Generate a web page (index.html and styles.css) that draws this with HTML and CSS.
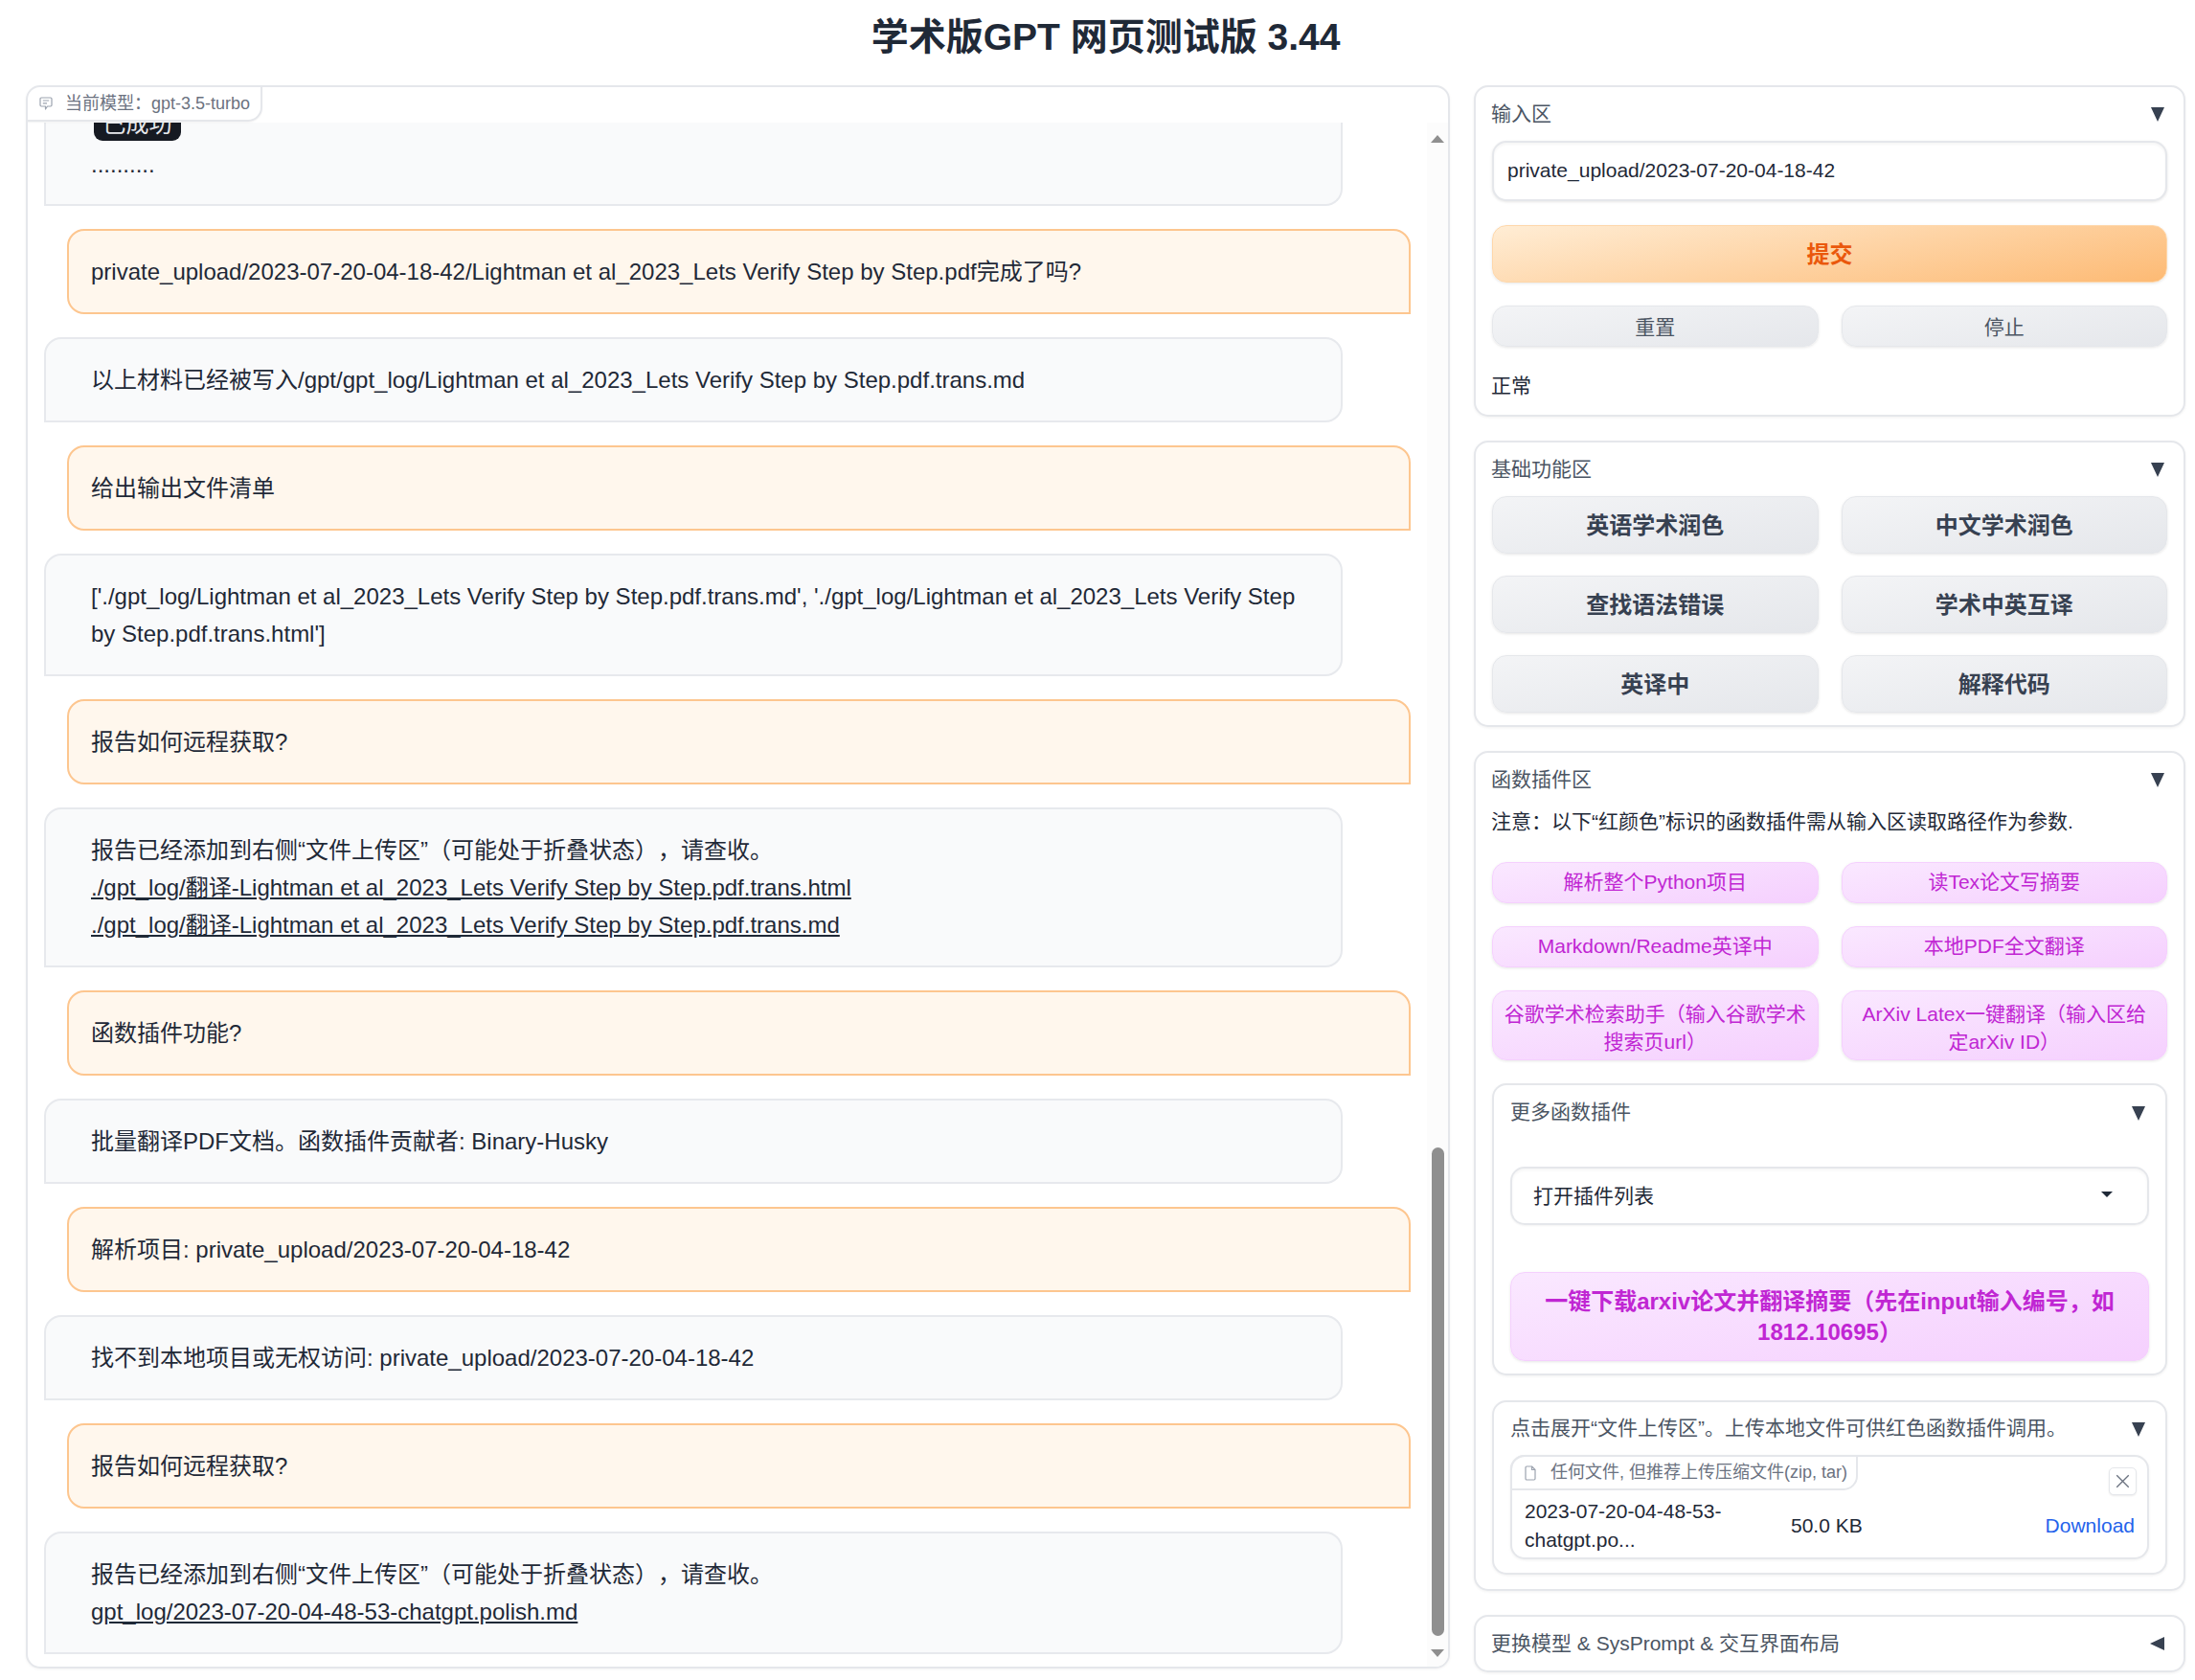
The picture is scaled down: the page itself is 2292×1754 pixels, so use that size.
FILE: index.html
```html
<!DOCTYPE html>
<html lang="zh-CN">
<head>
<meta charset="utf-8">
<title>学术版GPT 网页测试版 3.44</title>
<link rel="stylesheet" href="styles.css">
</head>
<body>
<h1 class="page-title">学术版GPT 网页测试版 3.44</h1>
<main class="layout">
  <section class="chat-panel">
    <div class="model-chip">
      <svg class="chip-icon" viewBox="0 0 14 14" fill="none" stroke="currentColor" stroke-width="1.2"><path d="M2.200 1h9.600A1.200 1.200 0 0 1 13 2.200v6.600A1.200 1.200 0 0 1 11.800 10H8.500L6.500 13V10H2.200A1.200 1.200 0 0 1 1 8.800V2.200A1.200 1.200 0 0 1 2.200 1z" stroke-linejoin="round"/><path d="M3.800 4h6.400M3.800 6.800h4.200"/></svg>
      <span class="chip-text">当前模型：gpt-3.5-turbo</span>
    </div>
    <div class="chat-scroll">
      <div class="messages">
        <div class="msg bot first">
          <span class="code-pill">已成功</span>
          <p class="dots">..........</p>
        </div>
        <div class="msg user">private_upload/2023-07-20-04-18-42/Lightman et al_2023_Lets Verify Step by Step.pdf完成了吗?</div>
        <div class="msg bot">以上材料已经被写入/gpt/gpt_log/Lightman et al_2023_Lets Verify Step by Step.pdf.trans.md</div>
        <div class="msg user">给出输出文件清单</div>
        <div class="msg bot">['./gpt_log/Lightman et al_2023_Lets Verify Step by Step.pdf.trans.md', './gpt_log/Lightman et al_2023_Lets Verify Step by Step.pdf.trans.html']</div>
        <div class="msg user">报告如何远程获取?</div>
        <div class="msg bot">报告已经添加到右侧“文件上传区”（可能处于折叠状态），请查收。<br><a href="#">./gpt_log/翻译-Lightman et al_2023_Lets Verify Step by Step.pdf.trans.html</a><br><a href="#">./gpt_log/翻译-Lightman et al_2023_Lets Verify Step by Step.pdf.trans.md</a></div>
        <div class="msg user">函数插件功能?</div>
        <div class="msg bot">批量翻译PDF文档。函数插件贡献者: Binary-Husky</div>
        <div class="msg user">解析项目: private_upload/2023-07-20-04-18-42</div>
        <div class="msg bot">找不到本地项目或无权访问: private_upload/2023-07-20-04-18-42</div>
        <div class="msg user">报告如何远程获取?</div>
        <div class="msg bot">报告已经添加到右侧“文件上传区”（可能处于折叠状态），请查收。<br><a href="#">gpt_log/2023-07-20-04-48-53-chatgpt.polish.md</a></div>
      </div>
      <div class="scrollbar">
        <span class="arrow-up"></span>
        <div class="track"><div class="thumb"></div></div>
        <span class="arrow-down"></span>
      </div>
    </div>
  </section>

  <aside class="side">
    <section class="card card-input">
      <div class="card-head"><span class="head-label">输入区</span><span class="tri-down"></span></div>
      <div class="text-input">private_upload/2023-07-20-04-18-42</div>
      <button class="btn btn-submit">提交</button>
      <div class="grid-2 row-tools">
        <button class="btn btn-plain">重置</button>
        <button class="btn btn-plain">停止</button>
      </div>
      <div class="status">正常</div>
    </section>

    <section class="card card-basic">
      <div class="card-head"><span class="head-label">基础功能区</span><span class="tri-down"></span></div>
      <div class="grid-2 basic-grid">
        <button class="btn btn-basic">英语学术润色</button>
        <button class="btn btn-basic">中文学术润色</button>
        <button class="btn btn-basic">查找语法错误</button>
        <button class="btn btn-basic">学术中英互译</button>
        <button class="btn btn-basic">英译中</button>
        <button class="btn btn-basic">解释代码</button>
      </div>
    </section>

    <section class="card card-plugin">
      <div class="card-head"><span class="head-label">函数插件区</span><span class="tri-down"></span></div>
      <p class="note">注意：以下“红颜色”标识的函数插件需从输入区读取路径作为参数.</p>
      <div class="grid-2 plugin-grid">
        <button class="btn btn-plugin">解析整个Python项目</button>
        <button class="btn btn-plugin">读Tex论文写摘要</button>
        <button class="btn btn-plugin">Markdown/Readme英译中</button>
        <button class="btn btn-plugin">本地PDF全文翻译</button>
        <button class="btn btn-plugin tall">谷歌学术检索助手（输入谷歌学术搜索页url）</button>
        <button class="btn btn-plugin tall narrow">ArXiv Latex一键翻译（输入区给定arXiv ID）</button>
      </div>

      <section class="sub-card sub-more">
        <div class="card-head sub-head"><span class="head-label">更多函数插件</span><span class="tri-down"></span></div>
        <div class="select"><span>打开插件列表</span><span class="tri-small"></span></div>
        <button class="btn btn-big-plugin">一键下载arxiv论文并翻译摘要（先在input输入编号，如1812.10695）</button>
      </section>

      <section class="sub-card sub-upload">
        <div class="card-head sub-head"><span class="head-label">点击展开“文件上传区”。上传本地文件可供红色函数插件调用。</span><span class="tri-down"></span></div>
        <div class="file-box">
          <div class="file-chip">
            <svg class="file-icon" viewBox="0 0 12 16" fill="none" stroke="currentColor" stroke-width="1.2"><path d="M2.200 1H7.500L11 4.500V13.800A1.200 1.200 0 0 1 9.800 15H2.200A1.200 1.200 0 0 1 1 13.800V2.200A1.200 1.200 0 0 1 2.200 1z" stroke-linejoin="round"/><path d="M7.500 1v3.500H11"/></svg>
            <span class="chip-text">任何文件, 但推荐上传压缩文件(zip, tar)</span>
          </div>
          <button class="file-close" aria-label="关闭">
            <svg viewBox="0 0 12 12" fill="none" stroke="currentColor" stroke-width="1.100"><path d="M1 1l10 10M11 1L1 11"/></svg>
          </button>
          <div class="file-row">
            <span class="file-name">2023-07-20-04-48-53-chatgpt.po...</span>
            <span class="file-size">50.0 KB</span>
            <a class="file-link" href="#">Download</a>
          </div>
        </div>
      </section>
    </section>

    <section class="card card-last">
      <div class="card-head"><span class="head-label">更换模型 &amp; SysPrompt &amp; 交互界面布局</span><span class="tri-left"></span></div>
    </section>
  </aside>
</main>
</body>
</html>
```
FILE: styles.css
```css
* { box-sizing: border-box; }

html, body { height: 100%; }

body {
  margin: 0;
  padding: 0 10px 0 27px;
  background: #fff;
  color: #1f2937;
  font-family: "Liberation Sans", "Noto Sans CJK SC", sans-serif;
  font-size: 21px;
  text-spacing-trim: space-all;
  overflow: hidden;
}

.page-title {
  margin: 0;
  height: 89px;
  padding-top: 14px;
  text-align: center;
  font-size: 39px;
  line-height: 50px;
  font-weight: 700;
  color: #1f2937;
}

.layout {
  display: grid;
  grid-template-columns: 1487px 743px;
  gap: 25px;
  align-items: start;
}

.chat-panel {
  position: relative;
  height: 1653px;
  border: 2px solid #e5e7eb;
  border-radius: 15px;
  background: #fff;
  box-shadow: 0 1px 3px rgba(0,0,0,.05);
  overflow: hidden;
}

.model-chip {
  position: absolute;
  left: -2px;
  top: -2px;
  z-index: 2;
  height: 38px;
  width: 247px;
  display: flex;
  align-items: center;
  gap: 13px;
  padding: 0 12px;
  background: #fff;
  border: 2px solid #e5e7eb;
  border-radius: 15px 0 15px 0;
  color: #6b7280;
  font-size: 18px;
  white-space: nowrap;
  box-shadow: 0 1px 2px rgba(0,0,0,.05);
}

.chip-text { margin-top: -5px; }

.chip-icon { width: 14px; height: 14px; flex: none; color: #9ca3af; }

.chat-scroll {
  display: flex;
  margin-top: 37px;
  height: 1612px;
  overflow: hidden;
}

.messages {
  flex: 1;
  min-width: 0;
  padding-left: 17px;
  display: flex;
  flex-direction: column;
  gap: 24px;
}

.msg {
  flex: none;
  font-size: 24px;
  line-height: 39px;
  padding: 23px;
  border: 2px solid;
  color: #1f2937;
}

.msg.user {
  margin-left: 24px;
  width: 1403px;
  background: #fff7ed;
  border-color: #fdc68f;
  border-radius: 18px 18px 0 18px;
}

.msg.bot {
  width: 1356px;
  background: #f9fafb;
  border-color: #e7e9ed;
  border-radius: 18px 18px 18px 0;
  padding-left: 47px;
  padding-right: 40px;
}

.msg.first {
  height: 87px;
  padding: 0 0 0 47px;
  border-top: 0;
  border-radius: 0 0 18px 0;
}

.msg a { color: #1f2937; text-decoration: underline; }

.code-pill {
  display: block;
  width: 91px;
  height: 40px;
  margin: -21px 0 0 3px;
  background: #161a22;
  color: #e5e7eb;
  border-radius: 9px;
  font-size: 24px;
  line-height: 46px;
  text-align: center;
  overflow: hidden;
}

.dots {
  margin: 5px 0 0;
  line-height: 39px;
  font-size: 24px;
}

.scrollbar {
  width: 22px;
  flex: none;
  margin-left: auto;
  background: #fcfcfc;
  display: flex;
  flex-direction: column;
  align-items: center;
}

.arrow-up {
  margin-top: 13px;
  border-left: 7px solid transparent;
  border-right: 7px solid transparent;
  border-bottom: 8px solid #8f8f8f;
}

.arrow-down {
  margin: 8px 0 10px;
  border-left: 7px solid transparent;
  border-right: 7px solid transparent;
  border-top: 8px solid #8f8f8f;
}

.track {
  flex: 1;
  width: 13px;
  padding-top: 1049px;
}

.thumb {
  height: 510px;
  background: #8f8f8f;
  border-radius: 7px;
}

.side {
  display: flex;
  flex-direction: column;
  gap: 25px;
  min-width: 0;
}

.card {
  border: 2px solid #e5e7eb;
  border-radius: 15px;
  background: #fff;
  padding: 13px 17px 15px;
  box-shadow: 0 1px 3px rgba(0,0,0,.06);
}

.card-head {
  display: flex;
  align-items: center;
  justify-content: space-between;
  height: 30px;
  color: #4b5563;
  font-size: 21px;
}

.head-label { margin: -4px 0 0 -1px; }

.sub-head .head-label { margin: -6px 0 0; }

.card-head .tri-down, .card-head .tri-left { margin-right: 3px; }

.sub-head .tri-down { margin-right: 4px; }

.tri-down {
  display: block;
  width: 0;
  border-left: 7px solid transparent;
  border-right: 7px solid transparent;
  border-top: 15px solid #374151;
}

.tri-left {
  display: block;
  width: 0;
  border-top: 7px solid transparent;
  border-bottom: 7px solid transparent;
  border-right: 15px solid #374151;
}

.tri-small {
  display: block;
  width: 0;
  border-left: 6px solid transparent;
  border-right: 6px solid transparent;
  border-top: 6px solid #1f2937;
}

.card-input { height: 346px; }

.text-input {
  margin-top: 13px;
  height: 63px;
  border: 2px solid #e5e7eb;
  border-radius: 15px;
  background: #fff;
  box-shadow: 0 1px 3px rgba(0,0,0,.1), inset 0 2px 3px rgba(0,0,0,.04);
  padding: 0 14px 2px;
  display: flex;
  align-items: center;
  font-size: 21px;
  color: #1f2937;
}

.btn {
  display: block;
  width: 100%;
  margin: 0;
  padding: 0 0 2px;
  border-radius: 15px;
  font-family: inherit;
  text-align: center;
  box-shadow: 0 1px 3px rgba(0,0,0,.1);
  cursor: pointer;
}

.btn-submit {
  margin-top: 25px;
  height: 60px;
  padding-bottom: 4px;
  border: 1px solid #fed7aa;
  background: linear-gradient(170deg, #ffedd5, #fdba74);
  color: #ea580c;
  font-size: 24px;
  font-weight: 700;
}

.grid-2 {
  display: grid;
  grid-template-columns: 1fr 1fr;
  column-gap: 24px;
}

.row-tools { margin-top: 24px; }

.btn-plain {
  height: 43px;
  border: 1px solid #e5e7eb;
  background: linear-gradient(170deg, #f3f4f6, #e5e7eb);
  color: #4b5563;
  font-size: 21px;
}

.status {
  margin: 26px 0 0 -1px;
  font-size: 21px;
  line-height: 30px;
  color: #1f2937;
}

.card-basic { height: 299px; }

.basic-grid { margin-top: 13px; row-gap: 23px; }

.btn-basic {
  height: 60px;
  padding-bottom: 4px;
  border: 1px solid #e5e7eb;
  background: linear-gradient(170deg, #f3f4f6, #e5e7eb);
  color: #374151;
  font-size: 24px;
  font-weight: 700;
}

.note {
  margin: 14px 0 0 -1px;
  font-size: 21px;
  line-height: 30px;
  color: #1f2937;
}

.plugin-grid { margin-top: 27px; row-gap: 24px; }

.btn-plugin {
  height: 43px;
  padding: 0 12px 2px;
  border: 1px solid #f5d0fe;
  background: linear-gradient(170deg, #fae8ff, #f5d0fe);
  color: #c026d3;
  font-size: 21px;
  line-height: 30px;
}

.btn-plugin.tall { height: 73px; padding: 4px 10px 0; line-height: 29px; }

.btn-plugin.tall.narrow { padding: 4px 14px 0; }

.sub-card {
  border: 2px solid #e5e7eb;
  border-radius: 15px;
  background: #fff;
  padding: 14px 17px;
  box-shadow: 0 1px 3px rgba(0,0,0,.06);
}

.sub-more { margin-top: 24px; height: 305px; }

.sub-upload { margin-top: 26px; height: 182px; padding-top: 13px; }

.sub-head { height: 30px; }

.select {
  margin-top: 41px;
  height: 61px;
  border: 2px solid #e5e7eb;
  border-radius: 15px;
  padding: 0 36px 4px 22px;
  display: flex;
  align-items: center;
  justify-content: space-between;
  font-size: 21px;
  color: #1f2937;
  box-shadow: 0 1px 2px rgba(0,0,0,.05), inset 0 2px 3px rgba(0,0,0,.04);
}

.btn-big-plugin {
  margin-top: 49px;
  height: 93px;
  padding: 0 20px;
  border: 1px solid #f5d0fe;
  background: linear-gradient(170deg, #fae8ff, #f5d0fe);
  color: #c026d3;
  font-size: 24px;
  line-height: 32px;
  font-weight: 700;
}

.file-box {
  position: relative;
  margin-top: 12px;
  height: 109px;
  border: 2px solid #e5e7eb;
  border-radius: 15px;
  background: #fff;
  box-shadow: 0 1px 3px rgba(0,0,0,.06);
}

.file-chip {
  display: flex;
  align-items: center;
  gap: 15px;
  width: 363px;
  height: 37px;
  padding: 0 13px;
  margin: -2px 0 0 -2px;
  border: 2px solid #e5e7eb;
  border-radius: 15px 0 15px 0;
  color: #6b7280;
  font-size: 18px;
  white-space: nowrap;
}

.file-icon { width: 12px; height: 16px; flex: none; color: #9ca3af; }

.file-close {
  position: absolute;
  top: 11px;
  right: 11px;
  width: 29px;
  height: 29px;
  padding: 6px;
  border: 1px solid #e5e7eb;
  border-radius: 5px;
  background: #fff;
  color: #6b7280;
  box-shadow: 0 1px 2px rgba(0,0,0,.08);
}

.file-close svg { display: block; width: 100%; height: 100%; }

.file-row {
  display: grid;
  grid-template-columns: 278px 1fr auto;
  align-items: center;
  padding: 7px 13px 0 13px;
  font-size: 21px;
  line-height: 30px;
  color: #1f2937;
}

.file-name { width: 230px; }

.file-link { color: #2563eb; text-decoration: none; }

.card-last { height: 60px; padding-top: 13px; }
```
